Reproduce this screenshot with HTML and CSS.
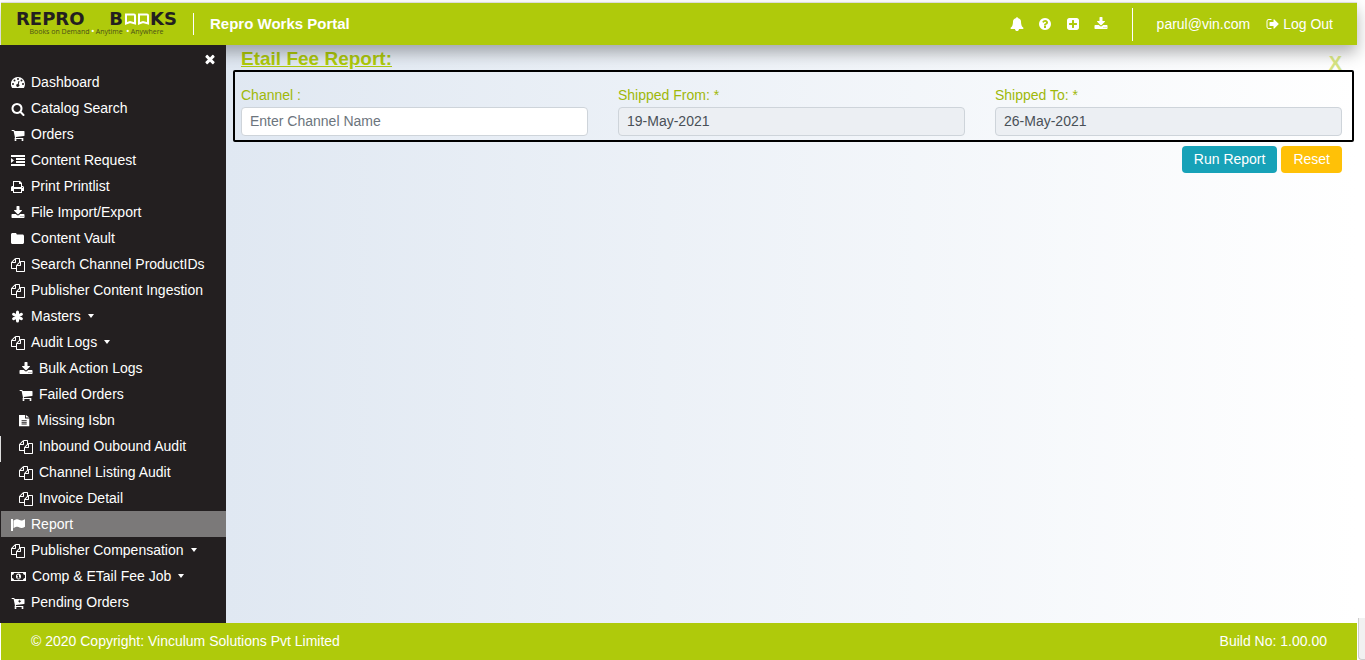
FILE: index.html
```
<!DOCTYPE html>
<html lang="en">
<head>
  <meta charset="UTF-8" />
  <meta name="viewport" content="width=device-width, initial-scale=1" />
  <title>Repro Works Portal - Etail Fee Report</title>
  <link rel="stylesheet" href="styles.css">
</head>
<body>
  <!-- icon sprite -->
  <svg class="sprite" aria-hidden="true">
    <symbol id="i-bell" viewBox="0 0 1792 1792"><path d="M1728 1408q0 52-38 90t-90 38h-448q0 106-75 181t-181 75-181-75-75-181h-448q-52 0-90-38t-38-90q50-42 91-88t85-119.500 74.500-158.500 50-206 19.500-260q0-152 117-282.500t307-158.500q-8-19-8-39 0-40 28-68t68-28 68 28 28 68q0 20-8 39 190 28 307 158.500t117 282.500q0 139 19.500 260t50 206 74.500 158.500 85 119.500 91 88z"/></symbol>
    <symbol id="i-help" viewBox="0 0 1792 1792"><path d="M1024 1376v-192q0-14-9-23t-23-9h-192q-14 0-23 9t-9 23v192q0 14 9 23t23 9h192q14 0 23-9t9-23zm256-672q0-88-55.500-163t-138.500-116-170-41q-243 0-371 213-15 24 8 42l132 100q7 6 19 6 16 0 25-12 53-68 86-92 34-24 86-24 48 0 85.500 26t37.500 59q0 38-20 61t-68 45q-63 28-115.500 86.500t-52.500 125.500v36q0 14 9 23t23 9h192q14 0 23-9t9-23q0-19 21.500-49.500t54.500-49.500q32-18 49-28.500t46-35 44.500-48 28-60.500 12.500-81zm384 192q0 209-103 385.500t-279.500 279.500-385.500 103-385.500-103-279.500-279.500-103-385.500 103-385.500 279.500-279.500 385.500-103 385.500 103 279.500 279.500 103 385.500z"/></symbol>
    <symbol id="i-plus" viewBox="0 0 1792 1792"><path d="M1408 960v-128q0-26-19-45t-45-19h-320v-320q0-26-19-45t-45-19h-128q-26 0-45 19t-19 45v320h-320q-26 0-45 19t-19 45v128q0 26 19 45t45 19h320v320q0 26 19 45t45 19h128q26 0 45-19t19-45v-320h320q26 0 45-19t19-45zm256-544v960q0 119-84.500 203.500t-203.500 84.500h-960q-119 0-203.500-84.500t-84.500-203.500v-960q0-119 84.500-203.500t203.500-84.500h960q119 0 203.500 84.500t84.500 203.500z"/></symbol>
    <symbol id="i-download" viewBox="0 0 1792 1792"><path d="M1344 1344q0-26-19-45t-45-19-45 19-19 45 19 45 45 19 45-19 19-45zm256 0q0-26-19-45t-45-19-45 19-19 45 19 45 45 19 45-19 19-45zm128-224v320q0 40-28 68t-68 28h-1472q-40 0-68-28t-28-68v-320q0-40 28-68t68-28h465l135 136q58 56 136 56t136-56l136-136h464q40 0 68 28t28 68zm-325-569q17 41-14 70l-448 448q-18 19-45 19t-45-19l-448-448q-31-29-14-70 17-39 59-39h256v-448q0-26 19-45t45-19h256q26 0 45 19t19 45v448h256q42 0 59 39z"/></symbol>
    <symbol id="i-logout" viewBox="0 0 1792 1792"><path d="M704 1440q0 4 1 20t.5 26.500-3 23.500-10 19.500-20.500 6.500h-320q-119 0-203.500-84.500t-84.500-203.500v-704q0-119 84.500-203.500t203.500-84.500h320q13 0 22.500 9.500t9.500 22.500q0 4 1 20t.5 26.500-3 23.500-10 19.500-20.500 6.500h-320q-66 0-113 47t-47 113v704q0 66 47 113t113 47h312l11.500 1 11.500 3 8 5.500 7 9 2 13.500zm928-544q0 26-19 45l-544 544q-19 19-45 19t-45-19-19-45v-288h-448q-26 0-45-19t-19-45v-384q0-26 19-45t45-19h448v-288q0-26 19-45t45-19 45 19l544 544q19 19 19 45z"/></symbol>
    <symbol id="i-times" viewBox="0 0 1792 1792"><path d="M1490 1322q0 40-28 68l-136 136q-28 28-68 28t-68-28l-294-294-294 294q-28 28-68 28t-68-28l-136-136q-28-28-28-68t28-68l294-294-294-294q-28-28-28-68t28-68l136-136q28-28 68-28t68 28l294 294 294-294q28-28 68-28t68 28l136 136q28 28 28 68t-28 68l-294 294 294 294q28 28 28 68z"/></symbol>
    <symbol id="i-search" viewBox="0 0 1792 1792"><path d="M1216 832q0-185-131.500-316.500t-316.500-131.500-316.500 131.500-131.500 316.500 131.500 316.500 316.500 131.500 316.500-131.500 131.500-316.500zm512 832q0 52-38 90t-90 38q-54 0-90-38l-343-342q-179 124-399 124-143 0-273.500-55.500t-225-150-150-225-55.500-273.500 55.500-273.500 150-225 225-150 273.500-55.500 273.500 55.500 225 150 150 225 55.500 273.500q0 220-124 399l343 343q37 37 37 90z"/></symbol>
    <symbol id="i-cart" viewBox="0 0 1792 1792"><path d="M704 1536q0 52-38 90t-90 38-90-38-38-90 38-90 90-38 90 38 38 90zm896 0q0 52-38 90t-90 38-90-38-38-90 38-90 90-38 90 38 38 90zm128-1088v512q0 24-16.500 42.500t-40.500 21.500l-1044 122q13 60 13 70 0 16-24 64h920q26 0 45 19t19 45-19 45-45 19h-1024q-26 0-45-19t-19-45q0-11 8-31.500t16-36 21.500-40 15.500-29.500l-177-823h-204q-26 0-45-19t-19-45 19-45 45-19h256q16 0 28.500 6.500t19.500 15.500 13 24.500 8 26 5.500 29.500 4.500 26h1201q26 0 45 19t19 45z"/></symbol>
    <symbol id="i-cart-down" viewBox="0 0 1792 1792"><path fill-rule="evenodd" d="M704 1536q0 52-38 90t-90 38-90-38-38-90 38-90 90-38 90 38 38 90zm896 0q0 52-38 90t-90 38-90-38-38-90 38-90 90-38 90 38 38 90zm128-1088v512q0 24-16.500 42.500t-40.500 21.500l-1044 122q13 60 13 70 0 16-24 64h920q26 0 45 19t19 45-19 45-45 19h-1024q-26 0-45-19t-19-45q0-11 8-31.500t16-36 21.500-40 15.500-29.500l-177-823h-204q-26 0-45-19t-19-45 19-45 45-19h256q16 0 28.500 6.500t19.500 15.500 13 24.500 8 26 5.500 29.500 4.500 26h1201q26 0 45 19t19 45zM1060 480v140h-190l234 240 234-240h-190v-140z"/></symbol>
    <symbol id="i-files" viewBox="0 0 1792 1792"><path d="M1696 384q40 0 68 28t28 68v1216q0 40-28 68t-68 28h-960q-40 0-68-28t-28-68v-288h-544q-40 0-68-28t-28-68v-672q0-40 20-88t48-76l408-408q28-28 76-48t88-20h416q40 0 68 28t28 68v328q68-40 128-40h416zm-544 213l-299 299h299v-299zm-640-384l-299 299h299v-299zm196 647l316-316v-416h-384v416q0 40-28 68t-68 28h-416v640h512v-256q0-40 20-88t48-76zm956 804v-1152h-384v416q0 40-28 68t-68 28h-416v640h896z"/></symbol>
    <symbol id="i-dashboard" viewBox="0 0 14 14"><path fill-rule="evenodd" d="M7 1a7 7 0 0 1 7 7c0 1.400-.4 2.600-1 3.700-.1.200-.3.300-.5.300h-11c-.2 0-.4-.1-.5-.3A7 7 0 0 1 7 1zM2 7a1 1 0 1 0 0 2 1 1 0 0 0 0-2zm1.500-3.500a1 1 0 1 0 0 2 1 1 0 0 0 0-2zM7 2a1 1 0 1 0 0 2 1 1 0 0 0 0-2zm3.500 1.500a1 1 0 1 0 0 2 1 1 0 0 0 0-2zM12 7a1 1 0 1 0 0 2 1 1 0 0 0 0-2zM7.500 4.900l-.8 3a1.500 1.500 0 1 0 1 .3l.8-3z"/></symbol>
    <symbol id="i-indent" viewBox="0 0 14 14"><path d="M0 1h14v2H0zM5 4h9v2H5zM5 7h9v2H5zM0 10h14v2H0zM0 4l3 2.500L0 9z"/></symbol>
    <symbol id="i-print" viewBox="0 0 14 14"><path fill-rule="evenodd" d="M2 1h7l2 2v3h.5C12.300 6 13 6.700 13 7.500V11h-2v2H2v-2H0V7.500C0 6.700.7 6 1.500 6H2zM3 2v5h7V4H8V2zM3 9v3h7V9zM11.500 7a.5.500 0 1 0 0 1 .5.500 0 0 0 0-1z"/></symbol>
    <symbol id="i-folder" viewBox="0 0 14 14"><path d="M1.500 1h2.800c.8 0 1.500.6 1.500 1.500h5.700c.8 0 1.500.7 1.500 1.500v6.500c0 .8-.7 1.500-1.500 1.500h-10C.7 12 0 11.300 0 10.500v-8C0 1.700.7 1 1.500 1z"/></symbol>
    <symbol id="i-asterisk" viewBox="0 0 14 14"><path stroke="currentColor" stroke-width="3" stroke-linecap="round" d="M6.500 2v9M2.600 4.200l7.800 4.600M10.400 4.200L2.600 8.800"/></symbol>
    <symbol id="i-file" viewBox="0 0 14 14"><path fill-rule="evenodd" d="M0 0h7v4h5v9H0zM8 0l4 3H8zM3 6v1h6V6zM3 8v1h6V8zM3 10v1h6v-1z"/></symbol>
    <symbol id="i-flag" viewBox="0 0 14 14"><path d="M0 1h2v12H0zM2.500 2.600C6 .6 7 1.300 8.500 2c1.700.8 3 .4 5.500-.8v7.600c-2 1.200-3.800 1.600-5.500.8C7 8.800 6 8.200 2.500 10.200z"/></symbol>
    <symbol id="i-money" viewBox="0 0 15 14"><path fill-rule="evenodd" d="M0 2h15v9H0zM3 3C3 4 2 5 1 5v3c1 0 2 1 2 2h9c0-1 1-2 2-2V5c-1 0-2-1-2-2zM7.500 3.600c1.500 0 2.500 1.300 2.500 2.900s-1 2.900-2.500 2.900S5 8.100 5 6.500s1-2.900 2.500-2.900zM7 4.800l-1 .8v.6h1v1.400h-.8v.8h2.600v-.8H8V4.800z"/></symbol>
  </svg>

  <header class="topbar">
    <a class="logo" href="#" aria-label="Repro Books">
      <span class="logo-name">
        <span>REPRO</span>
        <span class="logo-books">B<svg class="logo-oo" viewBox="0 0 26 11"><path fill="none" stroke="#fff" stroke-width="2" d="M2 1h8q1 0 1 1v8L6 8.500 2 10zM15 1h8q1 0 1 1v8l-5-1.500-4 1.500z"/></svg>KS</span>
      </span>
      <span class="logo-tag">Books on Demand <b>•</b> Anytime &nbsp;<b>•</b> Anywhere</span>
    </a>
    <span class="portal-name">Repro Works Portal</span>
    <nav class="top-icons">
      <a href="#" aria-label="Notifications"><svg class="icon"><use href="#i-bell"/></svg></a>
      <a href="#" aria-label="Help"><svg class="icon"><use href="#i-help"/></svg></a>
      <a href="#" aria-label="Add"><svg class="icon"><use href="#i-plus"/></svg></a>
      <a href="#" aria-label="Downloads"><svg class="icon"><use href="#i-download"/></svg></a>
    </nav>
    <div class="account">
      <a href="#">parul@vin.com</a>
      <a href="#" class="logout"><svg class="icon"><use href="#i-logout"/></svg>Log Out</a>
    </div>
  </header>

  <div class="layout">
    <aside class="sidebar">
      <button type="button" class="sidebar-close" aria-label="Close menu"><svg class="icon"><use href="#i-times"/></svg></button>
      <nav>
        <a href="#"><svg class="icon"><use href="#i-dashboard"/></svg>Dashboard</a>
        <a href="#"><svg class="icon"><use href="#i-search"/></svg>Catalog Search</a>
        <a href="#"><svg class="icon"><use href="#i-cart"/></svg>Orders</a>
        <a href="#"><svg class="icon"><use href="#i-indent"/></svg>Content Request</a>
        <a href="#"><svg class="icon"><use href="#i-print"/></svg>Print Printlist</a>
        <a href="#"><svg class="icon"><use href="#i-download"/></svg>File Import/Export</a>
        <a href="#"><svg class="icon"><use href="#i-folder"/></svg>Content Vault</a>
        <a href="#"><svg class="icon"><use href="#i-files"/></svg>Search Channel ProductIDs</a>
        <a href="#"><svg class="icon"><use href="#i-files"/></svg>Publisher Content Ingestion</a>
        <a href="#" class="has-menu"><svg class="icon"><use href="#i-asterisk"/></svg>Masters</a>
        <a href="#" class="has-menu"><svg class="icon"><use href="#i-files"/></svg>Audit Logs</a>
        <div class="submenu">
          <a href="#"><svg class="icon"><use href="#i-download"/></svg>Bulk Action Logs</a>
          <a href="#"><svg class="icon"><use href="#i-cart"/></svg>Failed Orders</a>
          <a href="#"><svg class="icon icon-narrow"><use href="#i-file"/></svg>Missing Isbn</a>
          <a href="#"><svg class="icon"><use href="#i-files"/></svg>Inbound Oubound Audit</a>
          <a href="#"><svg class="icon"><use href="#i-files"/></svg>Channel Listing Audit</a>
          <a href="#"><svg class="icon"><use href="#i-files"/></svg>Invoice Detail</a>
        </div>
        <a href="#" class="active"><svg class="icon"><use href="#i-flag"/></svg>Report</a>
        <a href="#" class="has-menu"><svg class="icon"><use href="#i-files"/></svg>Publisher Compensation</a>
        <a href="#" class="has-menu"><svg class="icon icon-wide"><use href="#i-money"/></svg>Comp &amp; ETail Fee Job</a>
        <a href="#"><svg class="icon"><use href="#i-cart-down"/></svg>Pending Orders</a>
      </nav>
    </aside>

    <main class="content">
      <div class="page-head">
        <h1>Etail Fee Report:</h1>
        <button type="button" class="page-close" aria-label="Close report">X</button>
      </div>
      <form>
        <div class="filters">
          <div class="field">
            <label for="channel">Channel :</label>
            <input type="text" id="channel" placeholder="Enter Channel Name" />
          </div>
          <div class="field">
            <label for="shippedFrom">Shipped From: *</label>
            <input type="text" id="shippedFrom" value="19-May-2021" readonly />
          </div>
          <div class="field">
            <label for="shippedTo">Shipped To: *</label>
            <input type="text" id="shippedTo" value="26-May-2021" readonly />
          </div>
        </div>
        <div class="actions">
          <button type="button" class="btn btn-run">Run Report</button>
          <button type="reset" class="btn btn-reset">Reset</button>
        </div>
      </form>
    </main>
  </div>

  <footer class="footer">
    <span>© 2020 Copyright: Vinculum Solutions Pvt Limited</span>
    <span>Build No: 1.00.00</span>
  </footer>
  <div class="left-tick"></div>
  <div class="scroll-corner"></div>
</body>
</html>
```
FILE: styles.css
```
* {
  box-sizing: border-box;
}
body {
  margin: 0;
  padding-top: 2px;
  min-height: 100vh;
  display: flex;
  flex-direction: column;
  position: relative;
  font-family: "Liberation Sans", Arial, sans-serif;
  font-size: 14px;
  line-height: 20px;
  background: #fff;
}
a {
  color: inherit;
  text-decoration: none;
}
button, input {
  font: inherit;
}
button {
  cursor: pointer;
}
.sprite {
  position: absolute;
  width: 0;
  height: 0;
}
.icon {
  width: 14px;
  height: 14px;
  flex: none;
  fill: currentColor;
}
.icon-wide {
  width: 15px;
}
.icon-narrow {
  width: 12px;
}

/* header */
.topbar {
  display: flex;
  align-items: center;
  height: 43px;
  margin: 0 8px 0 1px;
  padding: 0 24px 0 15px;
  border-top: 1px solid #dcdcdc;
  background: #afca0b;
  color: #fff;
  box-shadow: 0 8px 16px rgba(0, 0, 0, 0.3);
  position: relative;
}
.logo {
  width: 161px;
  color: #231f20;
}
.logo-name {
  display: flex;
  justify-content: space-between;
  font-family: "DejaVu Sans", sans-serif;
  font-size: 18px;
  font-weight: bold;
  line-height: 16px;
}
.logo-books {
  display: flex;
  align-items: center;
}
.logo-oo {
  width: 26px;
  height: 12px;
  margin-left: 1px;
}
.logo-tag {
  display: block;
  font-family: "Open Sans", sans-serif;
  font-size: 7px;
  line-height: 10px;
  text-align: center;
  color: #4b5018;
}
.logo-tag b {
  color: #fff;
}
.portal-name {
  margin-left: 16px;
  padding-left: 16px;
  border-left: 1px solid #fff;
  font-size: 15px;
  font-weight: bold;
  line-height: 22px;
}
.top-icons {
  display: flex;
  gap: 14px;
  margin-left: auto;
}
.top-icons a {
  display: flex;
}
.account {
  display: flex;
  align-items: center;
  gap: 16px;
  height: 33px;
  margin-left: 24px;
  padding-left: 24px;
  border-left: 1px solid #fff;
}
.logout {
  display: flex;
  align-items: center;
  gap: 3px;
}

/* sidebar */
.layout {
  display: flex;
  flex: 1;
}
.sidebar {
  width: 226px;
  flex: none;
  position: relative;
  background: #231f20;
  color: #fff;
}
.sidebar-close {
  display: flex;
  align-items: center;
  height: 24px;
  margin-left: auto;
  padding: 4px 9px 0;
  border: none;
  background: none;
  color: #fff;
}
.sidebar nav a {
  display: flex;
  align-items: center;
  gap: 6px;
  height: 26px;
  margin-left: 1px;
  padding-left: 10px;
}
.sidebar nav .icon {
  margin-top: 2px;
}
.sidebar .submenu a {
  padding-left: 18px;
}
.sidebar nav a.active {
  background: #7b7979;
}
.has-menu::after {
  content: "";
  margin-left: 1px;
  border: 3px solid transparent;
  border-top: 4px solid #fff;
  border-bottom: 0;
}

/* report */
.content {
  flex: 1;
  margin-right: 8px;
  background: linear-gradient(to right, #e0e8f2, #fff);
}
.page-head {
  display: flex;
  justify-content: space-between;
  height: 25px;
  padding: 2px 15px 0;
  color: #afca0b;
}
h1 {
  margin: 0;
  font-size: 19px;
  line-height: 24px;
  text-decoration: underline;
}
.page-close {
  padding: 6px 0 0;
  border: none;
  background: none;
  color: inherit;
  font-size: 20px;
  font-weight: bold;
  line-height: 20px;
  opacity: 0.5;
}
.filters {
  display: flex;
  gap: 30px;
  position: relative;
  margin: 0 3px 0 7px;
  padding: 13px 10px 4px 6px;
  border: 2px solid #000;
  border-radius: 2px;
}
.field {
  flex: 1;
}
.field label {
  display: block;
  padding-bottom: 2px;
  color: #9fb80a;
}
.field input {
  display: block;
  width: 100%;
  height: 29px;
  padding: 3px 8px 5px;
  border: 1px solid #ced4da;
  border-radius: 4px;
  background: #fff;
  color: #495057;
}
.field input::placeholder {
  color: #6c757d;
}
.field input:read-only {
  background: #eceff3;
}
.actions {
  display: flex;
  justify-content: flex-end;
  gap: 4px;
  padding: 4px 15px;
}
.btn {
  height: 27px;
  padding: 0 12px 2px;
  border: none;
  border-radius: 4px;
  color: #fff;
}
.btn-run {
  background: #17a2b8;
}
.btn-reset {
  background: #ffc107;
}

/* footer */
.footer {
  display: flex;
  justify-content: space-between;
  align-items: center;
  height: 37px;
  margin: 0 8px 0 1px;
  padding: 0 30px 1px;
  background: #afca0b;
  color: #fff;
}
.left-tick {
  position: absolute;
  left: 0;
  top: 436px;
  width: 1px;
  height: 26px;
  background: #ddd;
}
.scroll-corner {
  position: absolute;
  right: 0;
  bottom: 0;
  width: 7px;
  height: 42px;
  border-left: 1px solid #ccc;
  border-bottom: 1px solid #ccc;
  border-bottom-left-radius: 4px;
  background: #f1f1f1;
}
```
